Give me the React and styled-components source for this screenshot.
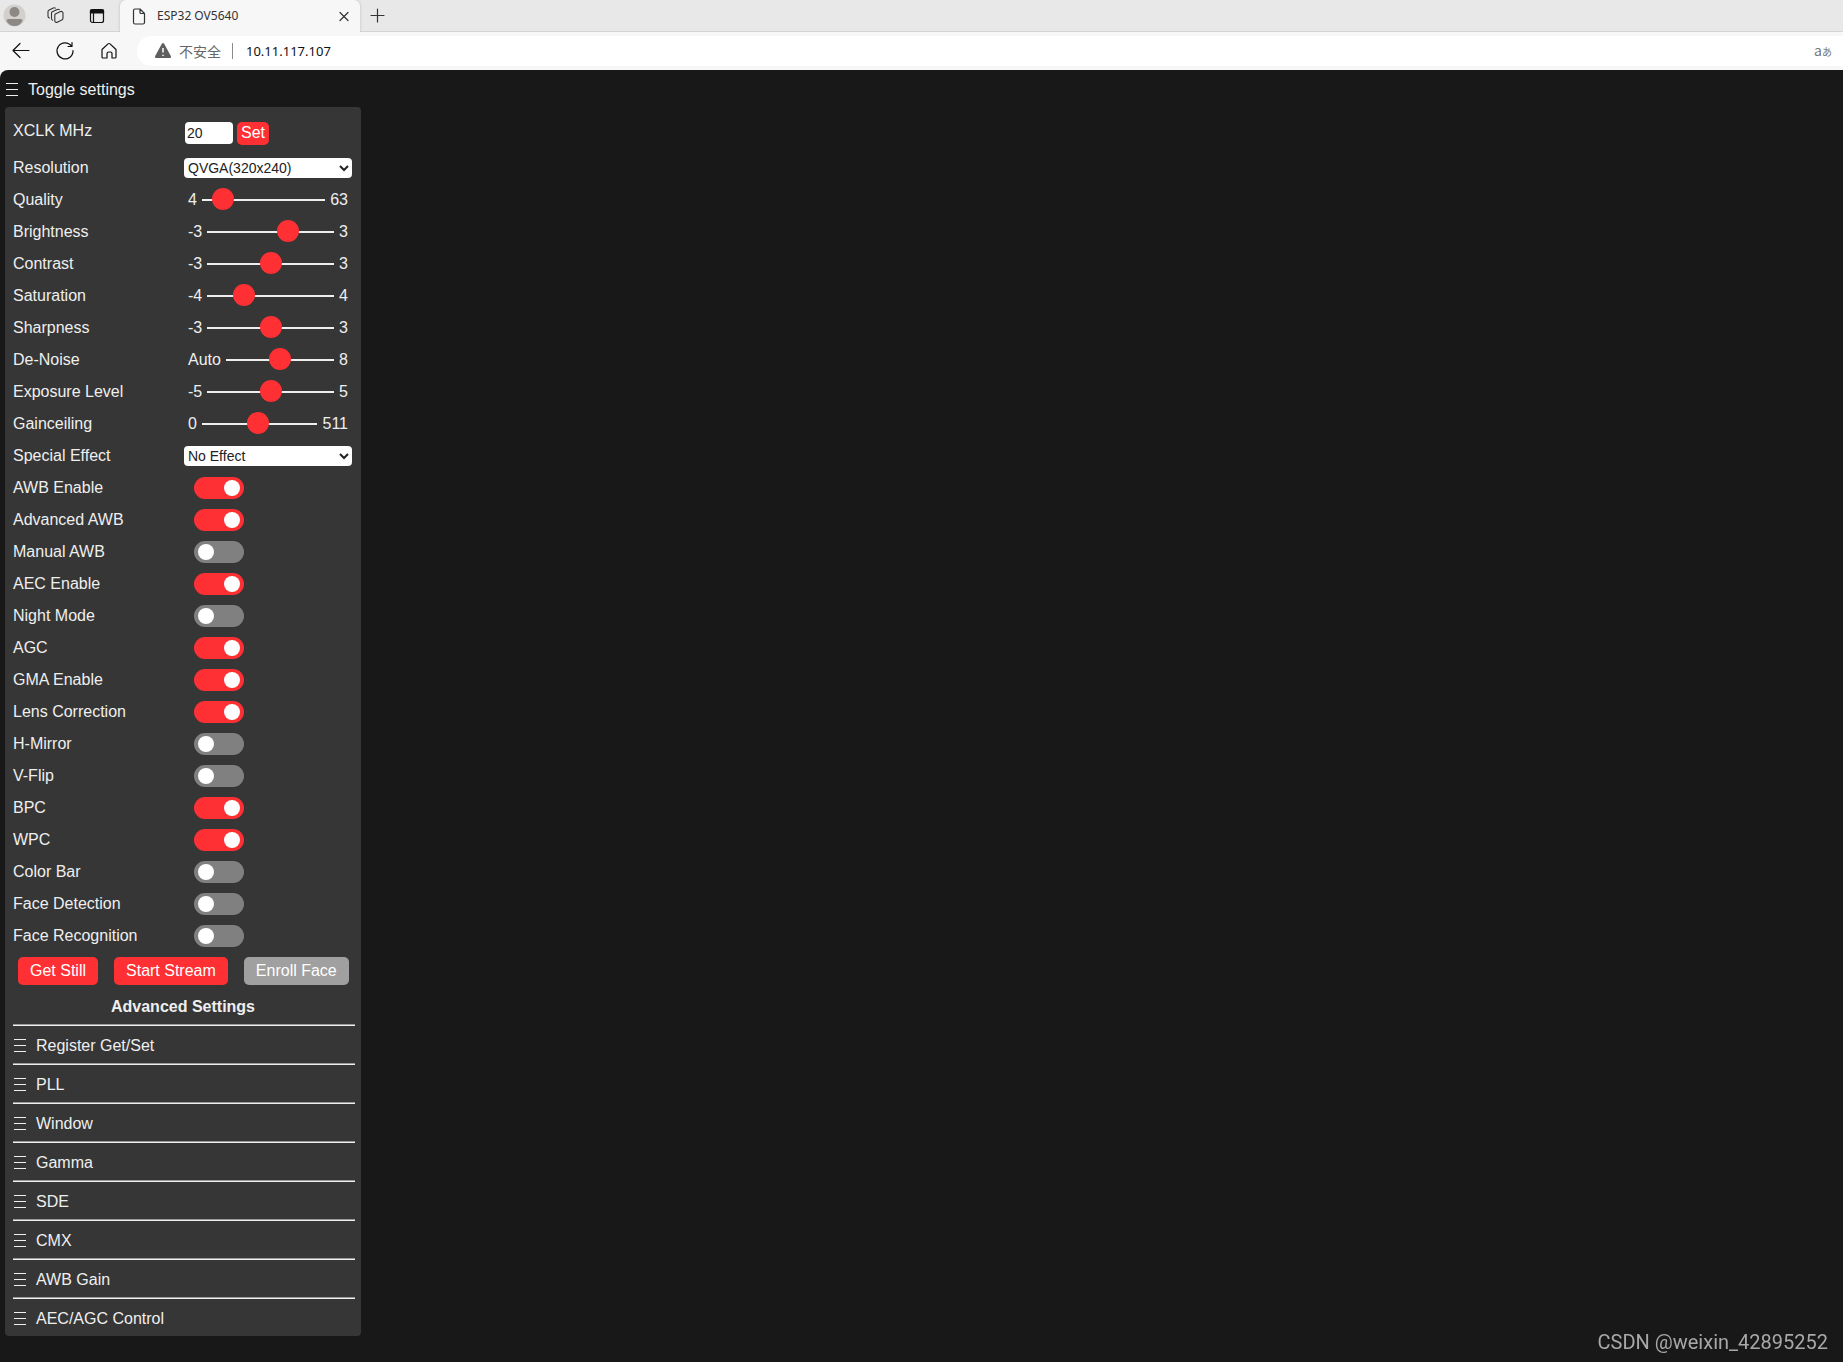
import React from "react";
import styled, { createGlobalStyle } from "styled-components";

const Global = createGlobalStyle`
  * { box-sizing: border-box; }
  html { background: #181818; }
  body { margin: 0; background: #181818; color: #efefef; font: 16px/22px "Liberation Sans", Arial, Helvetica, "Noto Sans CJK SC", sans-serif; }
  button, input, select { font-family: inherit; }
`;

const Browser = styled.header`
  background: #f7f7f7;
  color: #333;
`;
const TabStrip = styled.div`
  display: flex;
  align-items: stretch;
  height: 32px;
  background: #e8e8e8;
`;
const StripTools = styled.div`
  display: grid;
  grid-template-columns: 29px 53px 29px;
  align-items: center;
  justify-items: center;
  width: 120px;
  border-bottom: 1px solid #d4d4d4;
`;
const Tab = styled.div`
  display: flex;
  align-items: center;
  width: 240px;
  padding: 0 8px 0 12px;
  background: #f7f7f7;
  border-radius: 6px 6px 0 0;
  box-shadow: 0 0 3px #bbb;
  clip-path: inset(0 -4px 0 -4px);
`;
const TabTitle = styled.span`
  flex: 1;
  margin-left: 11px;
  font: 12px/16px "Noto Sans", sans-serif;
`;
const StripRest = styled.div`
  flex: 1;
  display: flex;
  align-items: center;
  padding-left: 9px;
  border-bottom: 1px solid #d4d4d4;
`;
const IconButton = styled.button`
  display: flex;
  padding: 0;
  border: 0;
  background: none;
  color: ${(p) => p.$color || "#333"};
`;
const Toolbar = styled.div`
  display: flex;
  align-items: center;
  height: 38px;
  padding-left: 9px;
`;
const NavButtons = styled.div`
  display: flex;
  gap: 20px;
  width: 128px;
`;
const AddressBar = styled.div`
  flex: 1;
  display: flex;
  align-items: center;
  height: 30px;
  padding: 0 11px 0 16px;
  border-radius: 15px 0 0 15px;
  background: #fff;
`;
const Security = styled.span`
  margin-left: 6px;
  padding-right: 11px;
  border-right: 1px solid #8a8a8a;
  color: #666;
  font: 14px/16px "Noto Sans CJK SC", sans-serif;
`;
const Address = styled.input`
  flex: 1;
  margin-left: 13px;
  padding: 0;
  border: 0;
  outline: 0;
  background: none;
  color: #111;
  && { font: 13px/18px "Noto Sans", sans-serif; }
`;
const Translate = styled.button`
  padding: 0;
  border: 0;
  background: none;
  color: #777;
  && { font: 14px/16px "Noto Sans CJK JP", sans-serif; }
  small { font-size: 10px; }
`;

const PageEdge = styled.div`
  background: #f7f7f7;
`;
const Page = styled.main`
  padding: 0 5px 26px;
  border-top-left-radius: 8px;
  background: #181818;
`;
const MenuToggle = styled.button`
  display: flex;
  align-items: center;
  gap: 10px;
  width: 100%;
  height: 37px;
  padding: 2px 0 0 1px;
  border: 0;
  background: none;
  color: #efefef;
  font-size: 16px;
  line-height: 22px;
  text-align: left;
`;
const Panel = styled.section`
  width: 356px;
  padding: 13px 6px 0 8px;
  border-radius: 4px;
  background: #363636;
`;
const Group = styled.div`
  display: flex;
  align-items: flex-start;
  height: 22px;
  margin-bottom: 10px;
  line-height: 24px;
`;
const ClockGroup = styled(Group)`
  height: 26px;
  line-height: 22px;
`;
const Label = styled.label`
  flex: 0 0 50%;
`;
const Control = styled.div`
  flex: 1;
  display: flex;
  align-items: flex-start;
  gap: 5px;
  min-width: 0;
  padding: 0 7px 0 4px;
`;
const Xclk = styled.div`
  display: flex;
  gap: 4px;
  padding: 2px 0 0 1px;
`;
const NumberBox = styled.input`
  width: 48px;
  height: 22px;
  padding: 0 2px;
  border: 0;
  border-radius: 4px;
  background: #fff;
  color: #222;
  font-size: 14px;
`;
const SetButton = styled.button`
  height: 23px;
  padding: 0 4px 2px;
  border: 0;
  border-radius: 5px;
  background: #ff3034;
  color: #fff;
  font-size: 16px;
  line-height: 21px;
`;
const Select = styled.select`
  width: 168px;
  height: 20px;
  margin-top: 2px;
  padding: 0;
  border: 0;
  border-radius: 4px;
  background: #fff;
  color: #222;
  font-size: 14px;
`;
const Slider = styled.input`
  appearance: none;
  flex: 1;
  width: 0;
  min-width: 0;
  height: 24px;
  margin: 0;
  background: none;
  &::-webkit-slider-runnable-track { height: 2px; background: #efefef; }
  &::-webkit-slider-thumb {
    appearance: none;
    width: 22px;
    height: 22px;
    margin-top: -11px;
    border-radius: 50%;
    background: #ff3034;
  }
`;
const Switch = styled.input`
  appearance: none;
  display: flex;
  align-items: center;
  width: 50px;
  height: 22px;
  margin: 1px 0 0 6px;
  padding: 0 4px;
  border-radius: 11px;
  background: #808080;
  &::before {
    content: "";
    width: 16px;
    height: 16px;
    border-radius: 50%;
    background: #fff;
  }
  &:checked { justify-content: flex-end; background: #ff3034; }
`;
const Actions = styled.div`
  display: flex;
  gap: 16px;
  padding: 1px 0 0 5px;
`;
const ActionButton = styled.button`
  height: 28px;
  padding: 0 12px;
  border: 0;
  border-radius: 5px;
  background: ${(p) => (p.disabled ? "#a0a0a0" : "#ff3034")};
  color: #fff;
  font-size: 16px;
  line-height: 28px;
`;
const Heading = styled.h2`
  margin: 10px 0 5px;
  padding-right: 2px;
  font-size: 16px;
  line-height: 24px;
  text-align: center;
`;
const Section = styled.div`
  border-top: 1px solid #9a9a9a;
  &::before { content: ""; display: block; height: 1px; background: #efefef; }
`;
const Watermark = styled.div`
  position: fixed;
  right: 15px;
  bottom: 8px;
  color: #a8a8a8;
  font: 20px/24px Roboto, sans-serif;
`;

const Svg = ({ w = 18, h = w, children, sw = 1.2 }) => (
  <svg width={w} height={h} viewBox={`0 0 ${w} ${h}`} fill="none" stroke="currentColor" strokeWidth={sw} strokeLinecap="round" strokeLinejoin="round" aria-hidden="true">
    {children}
  </svg>
);
const Bars = () => (
  <svg width="12" height="13" viewBox="0 0 12 13" stroke="currentColor" aria-hidden="true">
    <path d="M0 .5h12M0 6.5h12M0 12.5h12" />
  </svg>
);

const rows = [
  { label: "Resolution", select: "QVGA(320x240)" },
  { label: "Quality", min: 4, max: 63, value: 10 },
  { label: "Brightness", min: -3, max: 3, value: 1 },
  { label: "Contrast", min: -3, max: 3, value: 0 },
  { label: "Saturation", min: -4, max: 4, value: -2 },
  { label: "Sharpness", min: -3, max: 3, value: 0 },
  { label: "De-Noise", min: 0, minText: "Auto", max: 8, value: 4 },
  { label: "Exposure Level", min: -5, max: 5, value: 0 },
  { label: "Gainceiling", min: 0, max: 511, value: 248 },
  { label: "Special Effect", select: "No Effect" },
  { label: "AWB Enable", on: true },
  { label: "Advanced AWB", on: true },
  { label: "Manual AWB", on: false },
  { label: "AEC Enable", on: true },
  { label: "Night Mode", on: false },
  { label: "AGC", on: true },
  { label: "GMA Enable", on: true },
  { label: "Lens Correction", on: true },
  { label: "H-Mirror", on: false },
  { label: "V-Flip", on: false },
  { label: "BPC", on: true },
  { label: "WPC", on: true },
  { label: "Color Bar", on: false },
  { label: "Face Detection", on: false },
  { label: "Face Recognition", on: false },
];
const sections = ["Register Get/Set", "PLL", "Window", "Gamma", "SDE", "CMX", "AWB Gain", "AEC/AGC Control"];

function Setting({ row }) {
  const id = row.label.toLowerCase().replace(/\W+/g, "-");
  return (
    <Group>
      <Label htmlFor={id}>{row.label}</Label>
      {row.select && (
        <Select id={id} defaultValue={row.select}>
          <option>{row.select}</option>
        </Select>
      )}
      {row.max !== undefined && (
        <Control>
          <span>{row.minText || row.min}</span>
          <Slider id={id} type="range" min={row.min} max={row.max} defaultValue={row.value} />
          <span>{row.max}</span>
        </Control>
      )}
      {row.on !== undefined && (
        <Control>
          <Switch id={id} type="checkbox" defaultChecked={row.on} />
        </Control>
      )}
    </Group>
  );
}

export default function App() {
  return (
    <>
      <Global />
      <Browser>
        <TabStrip>
          <StripTools>
            <IconButton aria-label="Profile">
              <svg width="23" height="23" viewBox="0 0 23 23" aria-hidden="true">
                <circle cx="11.5" cy="11.5" r="11" fill="#d2cfcc" />
                <circle cx="11.5" cy="8" r="5" fill="#8c8884" />
                <path d="M3.5 17q0-2 2-2h12q2 0 2 2c-1.500 3-4.500 5-8 5s-6.500-2-8-5z" fill="#8c8884" />
              </svg>
            </IconButton>
            <IconButton aria-label="Workspaces">
              <Svg w={17} sw={1.1}>
                <path d="M8.300 7l5.200-2.400q1-.4 1.700.1.800.4.800 1.300v5.300q0 .9-.8 1.400l-4.900 2.500q-.8.400-1.600 0-.9-.5-.9-1.400V8.500q0-1 .5-1.500z" />
                <path d="M5.700 13.200q-1.200-.4-1.200-1.600V6q0-.8.800-1.300l5-2.300q1.200-.5 2 .3" />
                <path d="M2.400 11q-1.400-.4-1.400-1.700V4.500q0-.8.800-1.200L6.300 1q1.300-.5 2 .2" />
              </Svg>
            </IconButton>
            <IconButton aria-label="Tab actions" $color="#111">
              <Svg w={16} sw={1.2}>
                <rect x="1.500" y="1.500" width="13" height="13" rx="2" />
                <path d="M1.500 2h13v3h-13z" fill="currentColor" />
                <path d="M4.500 5v9.500" />
              </Svg>
            </IconButton>
          </StripTools>
          <Tab>
            <Svg w={14} h={17}>
              <path d="M8 1H3q-1.500 0-1.500 1.500v12Q1.500 16 3 16h8q1.500 0 1.500-1.500v-9zM8 1v3.500q0 1 1 1h3.500" />
            </Svg>
            <TabTitle>ESP32 OV5640</TabTitle>
            <IconButton aria-label="Close tab">
              <Svg w={16}><path d="M4 4.500l8 8M12 4.500l-8 8" /></Svg>
            </IconButton>
          </Tab>
          <StripRest>
            <IconButton aria-label="New tab">
              <Svg w={17}><path d="M8.500 2v13M2 8.500h13" /></Svg>
            </IconButton>
          </StripRest>
        </TabStrip>
        <Toolbar>
          <NavButtons>
            <IconButton aria-label="Back" $color="#111">
              <Svg w={24}><path d="M4 11.500h16M11 4.500l-7 7 7 7" /></Svg>
            </IconButton>
            <IconButton aria-label="Refresh" $color="#111">
              <Svg w={24}><path d="M18.500 7.200A8 8 0 1 0 20 11.500M19 3.500v4h-4" /></Svg>
            </IconButton>
            <IconButton aria-label="Home" $color="#111">
              <Svg w={24}><path d="M5 10.500l6-5.600q1-.8 2 0l6 5.600V18q0 1-1 1h-3v-4.500q0-1.500-1.500-1.500h-1.500Q10 13 10 14.500V19H6q-1 0-1-1z" /></Svg>
            </IconButton>
          </NavButtons>
          <AddressBar>
            <svg width="20" height="18" viewBox="0 0 20 18" aria-hidden="true">
              <path d="M8.700 2q1.300-1.800 2.600 0l6.500 12q.8 2-1.300 2h-13q-2.100 0-1.300-2z" fill="#5f5f5f" />
              <path d="M10 6v4.500M10 12.700v1.200" stroke="#fff" strokeWidth="1.500" />
            </svg>
            <Security>不安全</Security>
            <Address aria-label="Address" defaultValue="10.11.117.107" />
            <Translate>a<small>あ</small></Translate>
          </AddressBar>
        </Toolbar>
      </Browser>
      <PageEdge>
        <Page>
          <MenuToggle><Bars />Toggle settings</MenuToggle>
          <Panel>
            <ClockGroup>
              <Label htmlFor="xclk">XCLK MHz</Label>
              <Xclk>
                <NumberBox id="xclk" type="text" defaultValue="20" />
                <SetButton>Set</SetButton>
              </Xclk>
            </ClockGroup>
            {rows.map((row) => <Setting key={row.label} row={row} />)}
            <Actions>
              <ActionButton>Get Still</ActionButton>
              <ActionButton>Start Stream</ActionButton>
              <ActionButton disabled>Enroll Face</ActionButton>
            </Actions>
            <Heading>Advanced Settings</Heading>
            {sections.map((name) => (
              <Section key={name}>
                <MenuToggle><Bars />{name}</MenuToggle>
              </Section>
            ))}
          </Panel>
        </Page>
      </PageEdge>
      <Watermark>CSDN @weixin_42895252</Watermark>
    </>
  );
}
